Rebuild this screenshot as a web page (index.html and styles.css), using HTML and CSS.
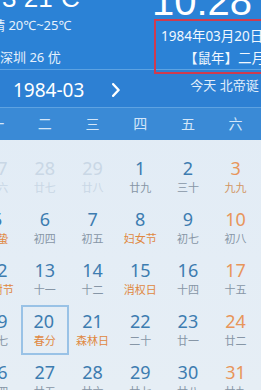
FILE: index.html
```html
<!DOCTYPE html>
<html lang="zh-CN">
<head>
    <meta charset="UTF-8">
    <meta name="viewport" content="width=device-width, initial-scale=1.0">
    <title>日历</title>
    <link rel="stylesheet" href="styles.css">
</head>
<body>
    <div class="top">
        <div class="weather">
            <div class="temp">3 21<span class="deg">°</span>C</div>
            <div class="range">晴 20℃~25℃</div>
            <div class="city">深圳 26 优</div>
        </div>
        <div class="clock">
            <div class="time">10:28</div>
            <div class="datebox">
                <div class="solar">1984年03月20日 星期二</div>
                <div class="lunar-date">【鼠年】二月十八</div>
            </div>
        </div>
    </div>

    <div class="nav">
        <span class="month">1984-03</span>
        <svg class="next" width="8" height="14" viewBox="0 0 8 14">
            <path d="M1.2 1.2 L6.6 7 L1.2 12.8" fill="none" stroke="#fff" stroke-width="2.4" stroke-linecap="round" stroke-linejoin="round"/>
        </svg>
        <span class="today">今天 北帝诞</span>
    </div>

    <div class="weekdays">
        <span>一</span><span>二</span><span>三</span><span>四</span><span>五</span><span>六</span><span>日</span>
    </div>

    <div class="days">
        <div class="cell other"><b>27</b><i>廿六</i></div>
        <div class="cell other"><b>28</b><i>廿七</i></div>
        <div class="cell other"><b>29</b><i>廿八</i></div>
        <div class="cell"><b>1</b><i>廿九</i></div>
        <div class="cell"><b>2</b><i>三十</i></div>
        <div class="cell weekend"><b>3</b><i class="term">九九</i></div>
        <div class="cell weekend"><b>4</b><i>初二</i></div>

        <div class="cell"><b>5</b><i class="fest">惊蛰</i></div>
        <div class="cell"><b>6</b><i>初四</i></div>
        <div class="cell"><b>7</b><i>初五</i></div>
        <div class="cell"><b>8</b><i class="fest">妇女节</i></div>
        <div class="cell"><b>9</b><i>初七</i></div>
        <div class="cell weekend"><b>10</b><i>初八</i></div>
        <div class="cell weekend"><b>11</b><i>初九</i></div>

        <div class="cell"><b>12</b><i class="fest">植树节</i></div>
        <div class="cell"><b>13</b><i>十一</i></div>
        <div class="cell"><b>14</b><i>十二</i></div>
        <div class="cell"><b>15</b><i class="fest">消权日</i></div>
        <div class="cell"><b>16</b><i>十四</i></div>
        <div class="cell weekend"><b>17</b><i>十五</i></div>
        <div class="cell weekend"><b>18</b><i>十六</i></div>

        <div class="cell"><b>19</b><i>十七</i></div>
        <div class="cell selected"><b>20</b><i class="fest">春分</i></div>
        <div class="cell"><b>21</b><i class="fest">森林日</i></div>
        <div class="cell"><b>22</b><i>二十</i></div>
        <div class="cell"><b>23</b><i>廿一</i></div>
        <div class="cell weekend"><b>24</b><i>廿二</i></div>
        <div class="cell weekend"><b>25</b><i>廿三</i></div>

        <div class="cell"><b>26</b><i>廿四</i></div>
        <div class="cell"><b>27</b><i>廿五</i></div>
        <div class="cell"><b>28</b><i>廿六</i></div>
        <div class="cell"><b>29</b><i>廿七</i></div>
        <div class="cell"><b>30</b><i>廿八</i></div>
        <div class="cell weekend"><b>31</b><i>廿九</i></div>
        <div class="cell other"><b>1</b><i>三十</i></div>
    </div>
</body>
</html>
```

FILE: styles.css
```css
body {
    margin: 0;
    width: 261px;
    height: 390px;
    overflow: hidden;
    font-family: "Noto Sans", "Noto Sans CJK SC", sans-serif;
    background: linear-gradient(#e0ebf6, #e6eef5);
}

/* header: weather + clock */
.top {
    display: flex;
    height: 69px;
    background: #2b82d6;
    border-bottom: 1px solid #5ca2e2;
    color: #fff;
}

.weather {
    width: 154px;
    flex-shrink: 0;
}

.temp {
    font-family: "Liberation Sans", sans-serif;
    font-size: 26px;
    line-height: 26px;
    margin-top: -15px;
    padding-left: 2px;
    white-space: nowrap;
}

.deg {
    margin-right: -2px;
}

.range {
    font-size: 13px;
    line-height: 28px;
    margin-left: -8px;
    color: #e6f1fc;
    white-space: nowrap;
}

.city {
    font-size: 13px;
    line-height: 36px;
    color: #e6f1fc;
    white-space: nowrap;
}

.clock {
    flex: 1;
}

.time {
    font-family: "Liberation Sans", sans-serif;
    font-size: 40px;
    line-height: 40px;
    margin-top: -19px;
    margin-left: -2px;
    white-space: nowrap;
}

.datebox {
    position: relative;
    z-index: 1;
    box-sizing: border-box;
    width: 160px;
    height: 55px;
    margin-top: -2px;
    padding-top: 4px;
    border: 2px solid #cf3b4f;
    font-size: 13.5px;
    line-height: 22px;
    white-space: nowrap;
    color: #f2f8fe;
}

.solar {
    padding-left: 5px;
}

.lunar-date {
    padding-left: 28px;
}

/* month switcher */
.nav {
    display: flex;
    align-items: flex-start;
    height: 37px;
    padding-left: 13px;
    background: #2d80d3;
    border-bottom: 1px solid #5ea2e1;
    color: #fff;
    white-space: nowrap;
}

.month {
    font-size: 19px;
    line-height: 26px;
    margin-top: 7px;
}

.next {
    margin-top: 13px;
    margin-left: 28px;
}

.today {
    font-size: 13px;
    line-height: 20px;
    margin-top: 5px;
    margin-left: 70px;
    color: #e2eefb;
}

/* weekday labels */
.weekdays {
    display: grid;
    grid-template-columns: repeat(7, 47.7px);
    margin-left: -26.7px;
    height: 32px;
    background: #3a8ad6;
    font-family: "Noto Sans CJK SC", sans-serif;
    font-size: 14px;
    line-height: 31px;
    text-align: center;
    color: #d3e6f9;
}

/* day grid */
.days {
    display: grid;
    grid-template-columns: repeat(7, 47.7px);
    grid-auto-rows: 50px;
    row-gap: 1px;
    margin-left: -26.7px;
    padding-top: 12px;
}

.cell {
    box-sizing: border-box;
    padding-top: 6px;
    text-align: center;
    white-space: nowrap;
}

.cell b {
    display: block;
    font-weight: normal;
    font-size: 18px;
    line-height: 20px;
    color: #3d7cb0;
}

.cell i {
    display: block;
    font-style: normal;
    font-family: "Noto Sans CJK SC", sans-serif;
    font-size: 11px;
    line-height: 18px;
    color: #8796a6;
}

.cell.weekend b {
    color: #e8955a;
}

.cell i.fest {
    color: #e0883f;
}

.cell i.term {
    color: #d29561;
}

.cell.other b,
.cell.other i {
    color: #c9d7e5;
}

.cell.selected {
    border: 2px solid #99c2e6;
    padding-top: 4px;
}

.cell.selected b {
    margin-left: -2px;
}
```
